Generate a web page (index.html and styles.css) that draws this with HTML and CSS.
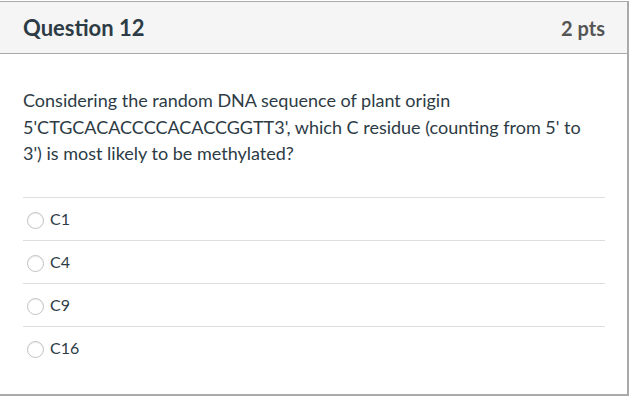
FILE: index.html
```html
<!DOCTYPE html>
<html>
<head>
<meta charset="utf-8">
<link rel="stylesheet" href="styles.css">
</head>
<body>
<div class="question">
  <div class="header">
    <span class="title">Question 12</span>
    <span class="pts">2 pts</span>
  </div>
  <div class="content">
    <p class="text">Considering the random DNA sequence of plant origin 5'CTGCACACCCCACACCGGTT3', which C residue (counting from 5' to 3') is most likely to be methylated?</p>
    <div class="answers">
      <label class="answer"><span class="radio"></span><span class="label">C1</span></label>
      <label class="answer"><span class="radio"></span><span class="label">C4</span></label>
      <label class="answer"><span class="radio"></span><span class="label">C9</span></label>
      <label class="answer"><span class="radio"></span><span class="label">C16</span></label>
    </div>
  </div>
</div>
</body>
</html>
```

FILE: styles.css
```css
html, body {
  margin: 0;
  padding: 0;
  background: #fff;
}
body {
  padding-top: 1px;
  font-family: Lato, "Noto Sans", sans-serif;
  color: #2d3b45;
}
.question {
  margin-left: -1px;
  width: 627px;
  border: 1px solid #aaaaaa;
  border-width: 1px 2px 2px 1px;
  box-sizing: content-box;
}
.header {
  display: flex;
  justify-content: space-between;
  align-items: center;
  height: 51px;
  background: #f5f5f5;
  border-bottom: 1px solid #aaaaaa;
  padding: 0 22px 0 23px;
}
.title {
  font-size: 22px;
  font-weight: 700;
  color: #2d3b45;
}
.pts {
  font-size: 20px;
  font-weight: 700;
  color: #555555;
}
.content {
  padding: 33px 22px 25px 23px;
}
.text {
  margin: 0;
  font-size: 18px;
  line-height: 26.5px;
  padding-right: 10px;
}
.answers {
  margin-top: 30px;
  border-top: 1px solid #dddddd;
}
.answer {
  display: flex;
  align-items: center;
  height: 42px;
  border-bottom: 1px solid #dddddd;
}
.answer:last-child {
  border-bottom: none;
}
.radio {
  width: 17px;
  height: 17px;
  border: 1px solid #c2c2c2;
  border-radius: 50%;
  margin-left: 4px;
  margin-right: 6px;
  margin-top: 4px;
  box-sizing: border-box;
  box-shadow: inset 0 1px 1px rgba(0,0,0,0.08);
}
.label {
  font-size: 16px;
  color: #2d3b45;
}
```
